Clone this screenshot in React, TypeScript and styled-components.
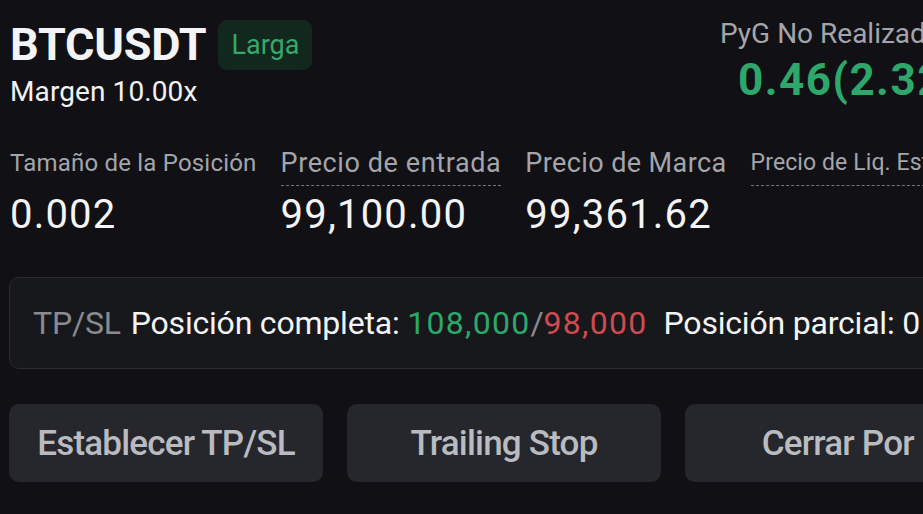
import React from "react";
import styled, { createGlobalStyle } from "styled-components";

const Global = createGlobalStyle`
  html, body { margin: 0; padding: 0; background: #111115; overflow: hidden; }
  body { font-family: "Roboto", "Noto Sans", sans-serif; color: #f2f2f4; }
`;

const Page = styled.div`
  width: 1140px;
  height: 514px;
  padding: 0 0 0 10px;
  box-sizing: border-box;
  background: #111115;
  display: flex;
  flex-direction: column;
`;

const Header = styled.div`
  display: flex;
  align-items: flex-start;
  height: 141px;
  flex: none;
`;

const LeftBlock = styled.div`
  display: flex;
  flex-direction: column;
  padding-top: 20px;
  width: 710px;
`;

const TitleRow = styled.div`
  display: flex;
  align-items: center;
  gap: 12px;
`;

const Symbol = styled.div`
  font-size: 45px;
  font-weight: 700;
  line-height: 50px;
  letter-spacing: -0.2px;
  color: #f4f4f6;
`;

const Badge = styled.div`
  height: 50px;
  padding: 0 13px;
  border-radius: 9px;
  background: #12271d;
  color: #38a86a;
  font-size: 27px;
  line-height: 50px;
  box-sizing: border-box;
`;

const Leverage = styled.div`
  margin-top: 6px;
  font-size: 28px;
  line-height: 32px;
  letter-spacing: 0.1px;
  color: #f2f2f4;
`;

const RightBlock = styled.div`
  flex: none;
  padding-top: 17px;
  white-space: nowrap;
`;

const PnlLabel = styled.div`
  font-size: 28px;
  line-height: 34px;
  color: #a4a5aa;
`;

const PnlValue = styled.div`
  margin-top: 5px;
  margin-left: 18px;
  font-size: 44px;
  font-weight: 700;
  line-height: 48px;
  letter-spacing: 1.5px;
  color: #2da86a;
`;

const Stats = styled.div`
  display: flex;
  gap: 24px;
  white-space: nowrap;
  flex: none;
`;

const Stat = styled.div`
  display: flex;
  flex-direction: column;
  align-items: flex-start;
`;

const StatLabel = styled.div<{ $size: number; $spacing: number; $dotted?: boolean }>`
  font-size: ${(p) => p.$size}px;
  letter-spacing: ${(p) => p.$spacing}px;
  height: 45px;
  line-height: 44px;
  color: #a4a5aa;
  box-sizing: border-box;
  border-bottom: 1.5px dashed ${(p) => (p.$dotted ? "#75767b" : "transparent")};
`;

const StatValue = styled.div`
  margin-top: 7px;
  height: 44px;
  font-size: 40px;
  line-height: 44px;
  letter-spacing: 1.2px;
  color: #f4f4f6;
`;

const TpSlBox = styled.div`
  flex: none;
  margin-top: 40px;
  margin-left: -1px;
  height: 92px;
  border: 1px solid #2a2c31;
  border-radius: 10px;
  background: #17181c;
  display: flex;
  align-items: center;
  padding-left: 23px;
  box-sizing: border-box;
`;

const TpSlLine = styled.div`
  white-space: nowrap;
  font-size: 32px;
  letter-spacing: -0.2px;
  color: #f4f4f6;
`;

const Muted = styled.span`
  color: #8a8b90;
  margin-right: 10px;
`;

const Gap = styled.span`
  margin-left: 16px;
`;

const Up = styled.span`
  color: #2da86a;
  letter-spacing: 1.3px;
`;

const Down = styled.span`
  color: #cf4b4f;
  letter-spacing: 1.3px;
`;

const Slash = styled.span`
  color: #8a8b90;
`;

const Buttons = styled.div`
  flex: none;
  margin-top: 35px;
  margin-left: -1px;
  display: flex;
  gap: 24px;
`;

const Btn = styled.div<{ $w: number }>`
  flex: none;
  width: ${(p) => p.$w}px;
  height: 78px;
  border-radius: 10px;
  background: #25272c;
  color: #b9bbc0;
  font-size: 35px;
  font-weight: 500;
  letter-spacing: -0.8px;
  display: flex;
  align-items: center;
  justify-content: center;
  white-space: nowrap;
`;

export default function App() {
  return (
    <>
      <Global />
      <Page>
        <Header>
          <LeftBlock>
            <TitleRow>
              <Symbol>BTCUSDT</Symbol>
              <Badge>Larga</Badge>
            </TitleRow>
            <Leverage>Margen 10.00x</Leverage>
          </LeftBlock>
          <RightBlock>
            <PnlLabel>PyG No Realizado</PnlLabel>
            <PnlValue>0.46(2.32%)</PnlValue>
          </RightBlock>
        </Header>
        <Stats>
          <Stat>
            <StatLabel $size={24} $spacing={0.2}>Tamaño de la Posición</StatLabel>
            <StatValue>0.002</StatValue>
          </Stat>
          <Stat>
            <StatLabel $size={27} $spacing={0.6} $dotted>Precio de entrada</StatLabel>
            <StatValue>99,100.00</StatValue>
          </Stat>
          <Stat>
            <StatLabel $size={27} $spacing={0.4}>Precio de Marca</StatLabel>
            <StatValue>99,361.62</StatValue>
          </Stat>
          <Stat>
            <StatLabel $size={23} $spacing={0.1} $dotted>Precio de Liq. Est.</StatLabel>
            <StatValue></StatValue>
          </Stat>
        </Stats>
        <TpSlBox>
          <TpSlLine>
            <Muted>TP/SL</Muted>
            Posición completa: <Up>108,000</Up>
            <Slash>/</Slash>
            <Down>98,000</Down>
            <Gap>Posición parcial: 0</Gap>
          </TpSlLine>
        </TpSlBox>
        <Buttons>
          <Btn $w={314}>Establecer TP/SL</Btn>
          <Btn $w={314}>Trailing Stop</Btn>
          <Btn $w={446}>Cerrar Por Mercado</Btn>
        </Buttons>
      </Page>
    </>
  );
}
